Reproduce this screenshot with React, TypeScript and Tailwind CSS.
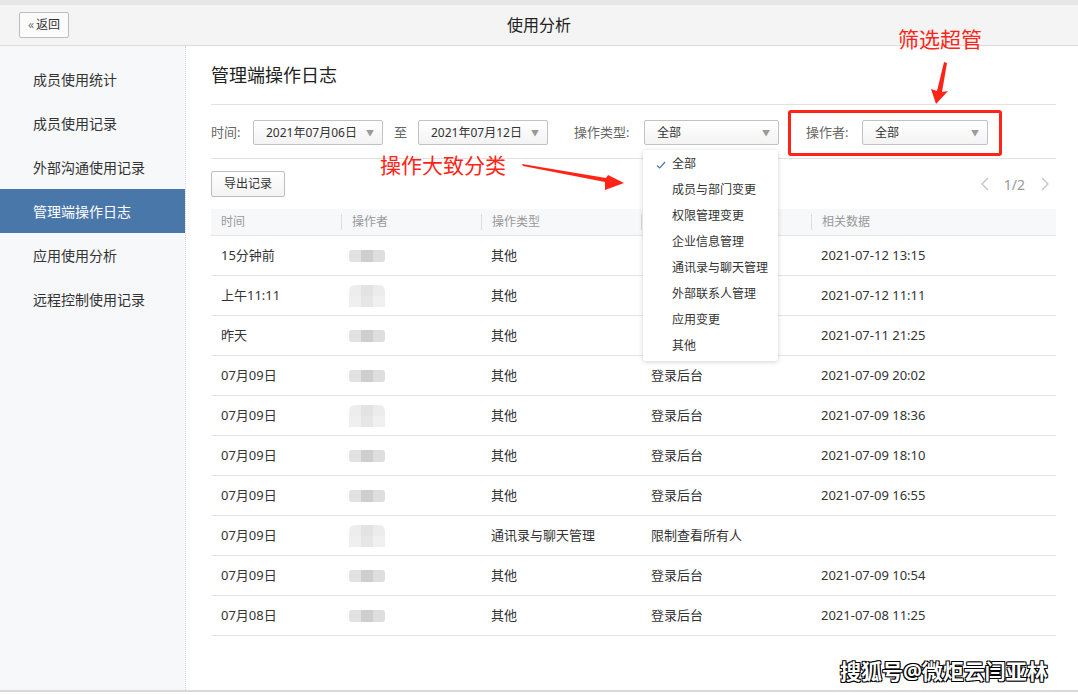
import React from "react";

const FONT = { fontFamily: '"Noto Sans", "Noto Sans CJK SC", sans-serif' };

type Row = { time: string; type: string; detail: string; data: string; mosaic: number };

const rows: Row[] = [
  { time: "15分钟前", type: "其他", detail: "", data: "2021-07-12 13:15", mosaic: 1 },
  { time: "上午11:11", type: "其他", detail: "", data: "2021-07-12 11:11", mosaic: 2 },
  { time: "昨天", type: "其他", detail: "", data: "2021-07-11 21:25", mosaic: 1 },
  { time: "07月09日", type: "其他", detail: "登录后台", data: "2021-07-09 20:02", mosaic: 1 },
  { time: "07月09日", type: "其他", detail: "登录后台", data: "2021-07-09 18:36", mosaic: 2 },
  { time: "07月09日", type: "其他", detail: "登录后台", data: "2021-07-09 18:10", mosaic: 1 },
  { time: "07月09日", type: "其他", detail: "登录后台", data: "2021-07-09 16:55", mosaic: 1 },
  { time: "07月09日", type: "通讯录与聊天管理", detail: "限制查看所有人", data: "", mosaic: 2 },
  { time: "07月09日", type: "其他", detail: "登录后台", data: "2021-07-09 10:54", mosaic: 1 },
  { time: "07月08日", type: "其他", detail: "登录后台", data: "2021-07-08 11:25", mosaic: 1 },
];

const sideItems = ["成员使用统计", "成员使用记录", "外部沟通使用记录", "管理端操作日志", "应用使用分析", "远程控制使用记录"];
const menuItems = ["全部", "成员与部门变更", "权限管理变更", "企业信息管理", "通讯录与聊天管理", "外部联系人管理", "应用变更", "其他"];

function Mosaic({ rowsCount }: { rowsCount: number }) {
  if (rowsCount === 2) {
    return (
      <div className="flex flex-col">
        <div className="flex">
          <div className="w-[12px] h-[11px] bg-[#ededed] rounded-tl-[6px]" />
          <div className="w-[12px] h-[11px] bg-[#e3e3e3]" />
          <div className="w-[12px] h-[11px] bg-[#ececec] rounded-tr-[6px]" />
        </div>
        <div className="flex">
          <div className="w-[12px] h-[11px] bg-[#efefef]" />
          <div className="w-[12px] h-[11px] bg-[#e6e6e6]" />
          <div className="w-[12px] h-[11px] bg-[#f0f0f0]" />
        </div>
      </div>
    );
  }
  return (
    <div className="flex">
      <div className="w-[12px] h-[12px] bg-[#e2e2e2] rounded-l-[3px]" />
      <div className="w-[12px] h-[12px] bg-[#cfcfcf]" />
      <div className="w-[12px] h-[12px] bg-[#dedede] rounded-r-[3px]" />
    </div>
  );
}

function SelectBox({ text, w, pl }: { text: string; w: string; pl: string }) {
  return (
    <div
      className={`${w} h-[25px] border border-[#c2c2c2] rounded-[2px] bg-gradient-to-b from-white to-[#f3f3f3] flex items-center justify-between ${pl} pr-[8px] text-[12px] text-[#333]`}
    >
      <span>{text}</span>
      <span className="text-[8px] text-[#9a9a9a]">▼</span>
    </div>
  );
}

export default function App() {
  return (
    <div className="w-[1078px] h-[695px] relative overflow-hidden bg-white text-[#333]" style={FONT}>
      <div className="h-[5px] bg-[#e6e7e9]" />
      {/* top bar */}
      <div className="h-[41px] bg-[#f4f4f4] border-b border-[#dcdcdc] relative flex items-center justify-center">
        <div className="absolute left-[19px] top-[7px] w-[50px] h-[26px] border border-[#bdbdbd] rounded-[2px] bg-[#fbfbfb] flex items-center justify-center text-[12px] text-[#333] gap-[2px]">
          <span className="text-[#777] text-[12px]">«</span>
          <span>返回</span>
        </div>
        <div className="text-[16px] text-[#222]">使用分析</div>
      </div>

      <div className="flex h-[646px] border-b-2 border-[#d9d9d9]">
        {/* sidebar */}
        <div className="w-[186px] bg-[#f7f8fa] border-r border-dotted border-[#d5d5d5] pt-[11px] shrink-0">
          {sideItems.map((s, i) => (
            <div
              key={s}
              className={`h-[44px] flex items-center pl-[33px] text-[14px] ${
                i === 3 ? "bg-[#4a77aa] text-white" : "text-[#333]"
              }`}
            >
              {s}
            </div>
          ))}
        </div>

        {/* main */}
        <div className="flex-1 pl-[25px] pr-[22px]">
          <div className="h-[59px] flex items-center border-b border-[#e2e2e2] text-[18px] text-[#222]">管理端操作日志</div>

          <div className="h-[54px] flex items-start pt-[15px] border-b border-[#e2e2e2] text-[13px] text-[#666]">
            <span className="w-[42px] leading-[25px]">时间:</span>
            <SelectBox text="2021年07月06日" w="w-[130px]" pl="pl-[12px]" />
            <span className="w-[35px] text-center leading-[25px]">至</span>
            <SelectBox text="2021年07月12日" w="w-[130px]" pl="pl-[12px]" />
            <span className="ml-[26px] w-[70px] leading-[25px]">操作类型:</span>
            <SelectBox text="全部" w="w-[135px]" pl="pl-[12px]" />
            <span className="ml-[27px] w-[56px] leading-[25px]">操作者:</span>
            <SelectBox text="全部" w="w-[126px]" pl="pl-[12px]" />
          </div>

          <div className="h-[50px] flex items-start pt-[12px] justify-between">
            <div className="w-[74px] h-[26px] border border-[#bdbdbd] rounded-[2px] bg-gradient-to-b from-white to-[#f3f3f3] flex items-center justify-center text-[12px] text-[#333]">
              导出记录
            </div>
            <div className="flex items-center h-[26px] text-[14px] text-[#999] pr-[6px]">
              <svg width="10" height="14" viewBox="0 0 10 14" className="mr-[14px]">
                <path d="M8 1 L2 7 L8 13" fill="none" stroke="#c4c4c4" strokeWidth="1.3" />
              </svg>
              <span>1/2</span>
              <svg width="10" height="14" viewBox="0 0 10 14" className="ml-[15px]">
                <path d="M2 1 L8 7 L2 13" fill="none" stroke="#c4c4c4" strokeWidth="1.3" />
              </svg>
            </div>
          </div>

          {/* table */}
          <div className="text-[13px]">
            <div className="h-[27px] bg-[#f7f8fa] border-b border-[#e6e6e6] flex items-center text-[12px] text-[#999]">
              <div className="w-[130px] pl-[10px]">时间</div>
              <div className="w-[140px] pl-[10px] border-l border-[#dedede] h-[16px] flex items-center">操作者</div>
              <div className="w-[160px] pl-[10px] border-l border-[#dedede] h-[16px] flex items-center">操作类型</div>
              <div className="w-[170px] pl-[10px] border-l border-[#dedede] h-[16px] flex items-center" />
              <div className="flex-1 pl-[10px] border-l border-[#dedede] h-[16px] flex items-center">相关数据</div>
            </div>
            {rows.map((r, i) => (
              <div key={i} className="h-[40px] border-b border-[#e6e6e6] flex items-center text-[#333]">
                <div className="w-[130px] pl-[10px]">{r.time}</div>
                <div className="w-[140px] pl-[8px]">
                  <Mosaic rowsCount={r.mosaic} />
                </div>
                <div className="w-[160px] pl-[10px]">{r.type}</div>
                <div className="w-[170px] pl-[10px]">{r.detail}</div>
                <div className="flex-1 pl-[10px]">{r.data}</div>
              </div>
            ))}
          </div>
        </div>
      </div>

      {/* dropdown menu */}
      <div className="absolute left-[643px] top-[150px] w-[135px] h-[211px] bg-white rounded-[3px] shadow-[0_1px_5px_rgba(0,0,0,0.18)] py-[1px] text-[12px] text-[#333]">
        {menuItems.map((m, i) => (
          <div key={m} className="h-[26px] flex items-center relative pl-[29px]">
            {i === 0 && (
              <svg width="10" height="8" viewBox="0 0 10 8" className="absolute left-[13px] top-[10px]">
                <path d="M1 4.5 L3.8 7 L9 1" fill="none" stroke="#4a77aa" strokeWidth="1.2" />
              </svg>
            )}
            {m}
          </div>
        ))}
      </div>

      {/* red annotation box */}
      <div className="absolute left-[788px] top-[110px] w-[214px] h-[46px] border-[3px] border-[#ff2418] rounded-[3px]" />

      {/* annotations */}
      <div className="absolute left-[898px] top-[26px] text-[21px] leading-[26px] text-[#ff2418]">筛选超管</div>
      <div className="absolute left-[380px] top-[152px] text-[21px] leading-[26px] text-[#ff2418]">操作大致分类</div>

      <svg className="absolute left-0 top-0 pointer-events-none" width="1078" height="695">
        <polygon points="944,62 947,63 942,92 948,91 936,104 931,89 937,91" fill="#ff2418" />
        <polygon points="522,164 523,166 605,182 605,190 624,183 608,175 606,178" fill="#ff2418" />
      </svg>

      {/* watermark */}
      <div className="absolute left-[840px] top-[658px] text-[21px] leading-[26px] font-bold text-white [text-shadow:0_0_1px_#000,1px_1px_0_#000,-1px_-1px_0_#000,1px_-1px_0_#000,-1px_1px_0_#000]">
        搜狐号@微炬云闫亚林
      </div>
    </div>
  );
}
